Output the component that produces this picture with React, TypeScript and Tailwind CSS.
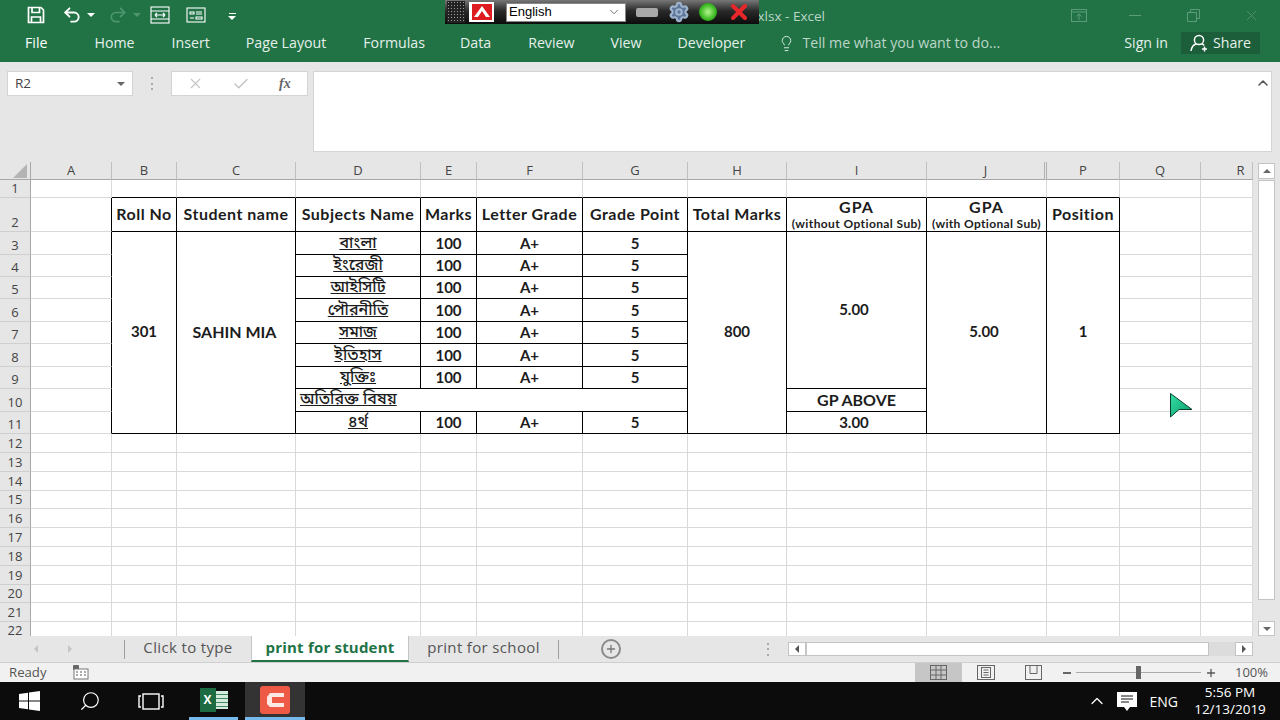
import React from "react";
import { Undo2, Redo2, Lightbulb, Search, X, Check, ChevronUp, ChevronDown, Plus, Settings } from "lucide-react";

const colWidths = ["w-[31px]","w-[81px]","w-[65px]","w-[119px]","w-[125px]","w-[56px]","w-[106px]","w-[105px]","w-[99px]","w-[140px]","w-[120px]","w-[73px]","w-[81px]","w-[52px]"];
const letters = ["A","B","C","D","E","F","G","H","I","J","P","Q","R"];
const tabs = [
  ["Home","ml-[47px]"],["Insert","ml-[37px]"],["Page Layout","ml-[36px]"],["Formulas","ml-[37px]"],["Data","ml-[35px]"],["Review","ml-[37px]"],["View","ml-[36px]"],["Developer","ml-[36px]"],
];
const subjects: [string, string][] = [
  ["3","বাংলা "],["4","ইংরেজী"],["5","আইসিটি"],["6","পৌরনীতি"],["7","সমাজ "],["8","ইতিহাস"],["9","যুক্তিঃ"],
];
const rowH: Record<string,string> = {"3":"h-[23px]","4":"h-[22px]","5":"h-[22px]","6":"h-[23px]","7":"h-[22px]","8":"h-[23px]","9":"h-[22px]","10":"h-[23px]","11":"h-[22px]"};
const blankRows = [["12","h-[19px]"],["13","h-[19px]"],["14","h-[19px]"],["15","h-[18px]"],["16","h-[19px]"],["17","h-[19px]"],["18","h-[19px]"],["19","h-[19px]"],["20","h-[18px]"],["21","h-[19px]"]];

const black = "border-r border-b border-black p-0 text-center align-middle font-bold text-[15px] leading-none text-[#1c1c1c] font-['Lato',sans-serif]";
const headCell = black + " pb-[2px]";
const head = "text-[16px] tracking-[0.5px]";
const light = "border-r border-b border-[#d9d9d9] p-0";
const rowHead = "border-r border-b border-r-[#a8a8a8] border-b-[#cfcfcf] bg-[#e6e6e6] p-0 text-center align-bottom text-[13px] leading-[17px] text-[#444]";
const bn = "font-['Noto_Sans_Bengali','Noto_Sans','Lohit_Bengali',sans-serif] underline text-[16px] font-medium";

function Light({ n }: { n: number }) {
  return <>{Array.from({ length: n }).map((_, i) => <td key={i} className={light} />)}</>;
}

function IconSave() {
  return (
    <svg width="18" height="18" viewBox="0 0 18 18" fill="none" stroke="#fff" strokeWidth="1.7">
      <path d="M1.5 1.5h12.5l2.5 2.5v12.5h-15z" />
      <path d="M5 1.5v5h7.5v-5M4.5 16.5v-5.5h9v5.5" />
    </svg>
  );
}

function Qat1() {
  return (
    <svg width="20" height="18" viewBox="0 0 20 18" fill="none" stroke="#fff" strokeWidth="1.1">
      <rect x="1" y="1" width="18" height="16" />
      <path d="M1 5h18M1 13h18M5 9h10M5 9l2-2M5 9l2 2M15 9l-2-2M15 9l-2 2" />
    </svg>
  );
}

function Qat2() {
  return (
    <svg width="20" height="16" viewBox="0 0 20 16" fill="none" stroke="#fff" strokeWidth="1.1">
      <rect x="1" y="1" width="18" height="14" />
      <path d="M4 5h4v2H4zM10 5h6M10 7h6M10 10h6v2h-6zM4 11h4" />
    </svg>
  );
}

function Win() {
  return (
    <svg width="21" height="20" viewBox="0 0 21 20" fill="#fff">
      <path d="M0 3l9-1.3v7.8H0zM10 1.5L21 0v9.5H10zM0 10.5h9v7.8L0 17zM10 10.5h11V20l-11-1.5z" />
    </svg>
  );
}

function ShareUser() {
  return (
    <svg width="19" height="18" viewBox="0 0 19 18" fill="none" stroke="#fff" strokeWidth="1.5">
      <circle cx="9" cy="6" r="4.6" />
      <path d="M1 17c.6-4 3-6.4 5.4-7.2M11.6 9.8c1 .3 1.9.9 2.6 1.6M14.5 12.5v5M12 15h5" />
    </svg>
  );
}

export default function App() {
  return (
    <div className="relative flex h-[720px] w-[1280px] flex-col overflow-hidden bg-white font-['Open_Sans',sans-serif]">
      {/* Title bar */}
      <header className="flex h-[62px] shrink-0 flex-col bg-[#217346] text-white">
        <div className="flex h-[30px] items-center">
          <div className="ml-[27px]"><IconSave /></div>
          <Undo2 className="ml-[17px]" size={20} strokeWidth={2.2} color="#fff" />
          <span className="ml-[5px] h-0 w-0 border-x-[4px] border-t-[4px] border-x-transparent border-t-white" />
          <Redo2 className="ml-[13px]" size={20} strokeWidth={2} color="#4f9670" />
          <span className="ml-[5px] h-0 w-0 border-x-[4px] border-t-[4px] border-x-transparent border-t-[#4f9670]" />
          <div className="ml-[9px]"><Qat1 /></div>
          <div className="ml-[16px]"><Qat2 /></div>
          <div className="ml-[22px] flex flex-col items-center gap-[2px] pt-[3px]">
            <span className="h-[1px] w-[7px] bg-white" />
            <span className="h-0 w-0 border-x-[4px] border-t-[4px] border-x-transparent border-t-white" />
          </div>
          <span className="ml-[518px] pt-[3px] text-[13.5px] text-[#bcd6c7]">.xlsx - Excel</span>
          <div className="ml-auto flex items-center pr-[20px]">
            <svg width="16" height="13" viewBox="0 0 16 13" fill="none" stroke="#5c9c7a"><rect x="0.5" y="0.5" width="15" height="12" /><path d="M0.5 3h15M8 11V5M5.5 7.5L8 5l2.5 2.5" /></svg>
            <span className="ml-[42px] h-[1px] w-[12px] bg-[#5c9c7a]" />
            <svg className="ml-[46px]" width="13" height="13" viewBox="0 0 13 13" fill="none" stroke="#5c9c7a"><path d="M0.5 3.5h9v9h-9zM3.5 3.5v-3h9v9h-3" /></svg>
            <X className="ml-[43px]" size={17} strokeWidth={1} color="#5c9c7a" />
          </div>
        </div>
        <nav className="flex h-[32px] items-center pb-[6px] text-[14.2px] text-[#e6f0ea]">
          <span className="ml-[25px] font-medium text-white">File</span>
          {tabs.map(([t, c]) => <span key={t} className={c}>{t}</span>)}
          <Lightbulb className="ml-[33px]" size={17} strokeWidth={1.4} color="#d9e8df" />
          <span className="ml-[7px] text-[#bcd6c7]">Tell me what you want to do...</span>
          <span className="ml-auto">Sign in</span>
          <span className="ml-[13px] mr-[20px] flex h-[22px] w-[79px] items-center justify-center gap-[4px] bg-[#1b5e39]">
            <ShareUser />Share
          </span>
        </nav>
      </header>

      {/* Formula bar */}
      <section className="flex h-[100px] shrink-0 items-start bg-[#e6e6e6] pt-[9px] pl-[7px] pr-[8px]">
        <div className="flex h-[25px] w-[126px] items-center justify-between border border-[#d4d4d4] bg-white pl-[7px] pr-[7px] text-[13.5px] text-[#444]">
          R2
          <span className="h-0 w-0 border-x-[4px] border-t-[4px] border-x-transparent border-t-[#666]" />
        </div>
        <span className="mt-[4px] ml-[18px] mr-[18px] flex h-[17px] flex-col justify-between py-[2px]">
          <i className="h-[2px] w-[2px] bg-[#aaa]" /><i className="h-[2px] w-[2px] bg-[#aaa]" /><i className="h-[2px] w-[2px] bg-[#aaa]" />
        </span>
        <div className="flex h-[25px] w-[137px] items-center border border-[#d4d4d4] bg-white pl-[15px]">
          <X size={17} strokeWidth={1.5} color="#c4c4c4" />
          <Check className="ml-[28px]" size={18} strokeWidth={2} color="#c4c4c4" />
          <span className="ml-[29px] font-['Liberation_Serif',serif] text-[14px] font-bold italic text-[#666]">fx</span>
        </div>
        <div className="ml-[5px] flex h-[81px] flex-1 justify-end border border-[#d4d4d4] bg-white pt-[3px]">
          <ChevronUp size={16} strokeWidth={2.4} color="#555" />
        </div>
      </section>

      {/* Sheet */}
      <section className="flex h-[474px] shrink-0">
        <div className="w-[1253px] shrink-0 border-r border-[#a8a8a8]">
          <table className="w-[1253px] table-fixed border-separate border-spacing-0">
            <colgroup>{colWidths.map((w, i) => <col key={i} className={w} />)}</colgroup>
            <tbody>
              <tr className="h-[18px]">
                <td className="border-r border-b border-[#a8a8a8] bg-[#e6e6e6] p-0">
                  <svg className="ml-[13px] mt-[1px]" width="14" height="14" viewBox="0 0 14 14"><path d="M14 0v14H0z" fill="#b4b4b4" /></svg>
                </td>
                {letters.map((l) => (
                  <td key={l} className={l === "J"
                    ? "border-r-[3px] border-b border-double border-r-[#b0b0b0] border-b-[#a8a8a8] bg-[#e6e6e6] p-0 text-center text-[13px] leading-none text-[#444]"
                    : l === "R"
                    ? "border-r border-b border-r-[#c0c0c0] border-b-[#a8a8a8] bg-[#e6e6e6] p-0 pl-[28px] text-center text-[13px] leading-none text-[#444]"
                    : "border-r border-b border-r-[#c0c0c0] border-b-[#a8a8a8] bg-[#e6e6e6] p-0 text-center text-[13px] leading-none text-[#444]"}>
                    {l}
                  </td>
                ))}
              </tr>
              <tr className="h-[18px]">
                <td className={rowHead}>1</td>
                <td className={light} />
                {letters.slice(1, 11).map((l) => <td key={l} className="border-r border-b border-r-[#d9d9d9] border-b-black p-0" />)}
                <Light n={2} />
              </tr>
              <tr className="h-[34px]">
                <td className={rowHead}>2</td>
                <td className="border-r border-b border-r-black border-b-[#d9d9d9] p-0" />
                <td className={headCell}><span className={head}>Roll No</span></td>
                <td className={headCell}><span className={head}>Student name</span></td>
                <td className={headCell}><span className={head}>Subjects Name</span></td>
                <td className={headCell}><span className={head}>Marks</span></td>
                <td className={headCell}><span className={head}>Letter Grade</span></td>
                <td className={headCell}><span className={head}>Grade Point</span></td>
                <td className={headCell}><span className={head}>Total Marks</span></td>
                <td className={black}>
                  <div className={head + " tracking-[1px]"}>GPA</div>
                  <div className="mt-[3px] text-[12px] tracking-[0.4px]">(without Optional Sub)</div>
                </td>
                <td className={black}>
                  <div className={head + " tracking-[1px]"}>GPA</div>
                  <div className="mt-[3px] text-[12px] tracking-[0.35px]">(with Optional Sub)</div>
                </td>
                <td className={headCell}><span className={head}>Position</span></td>
                <Light n={2} />
              </tr>
              {subjects.map(([n, s], i) => (
                <tr key={n} className={rowH[n]}>
                  <td className={rowHead}>{n}</td>
                  <td className="border-r border-b border-r-black border-b-[#d9d9d9] p-0" />
                  {i === 0 && (
                    <>
                      <td rowSpan={9} className={black + " pb-[2px]"}>301</td>
                      <td rowSpan={9} className={black + " pb-[2px]"}><span className="pr-[3px] text-[16px]">SAHIN MIA</span></td>
                    </>
                  )}
                  <td className={black}><span className={bn}>{s}</span></td>
                  <td className={black}>100</td>
                  <td className={black}>A+</td>
                  <td className={black}>5</td>
                  {i === 0 && (
                    <>
                      <td rowSpan={9} className={black + " pb-[2px]"}>800</td>
                      <td rowSpan={7} className={black + " pb-[2px]"}><span className="pr-[5px]">5.00</span></td>
                      <td rowSpan={9} className={black + " pb-[2px]"}><span className="pr-[5px]">5.00</span></td>
                      <td rowSpan={9} className={black + " pb-[2px]"}>1</td>
                    </>
                  )}
                  <Light n={2} />
                </tr>
              ))}
              <tr className={rowH["10"]}>
                <td className={rowHead}>10</td>
                <td className="border-r border-b border-r-black border-b-[#d9d9d9] p-0" />
                <td colSpan={4} className={black + " text-left"}>
                  <span className={bn + " ml-[4px] block text-left"}>অতিরিক্ত বিষয়</span>
                </td>
                <td className={black}><span className="text-[16px]">GP ABOVE</span></td>
                <Light n={2} />
              </tr>
              <tr className={rowH["11"]}>
                <td className={rowHead}>11</td>
                <td className="border-r border-b border-r-black border-b-[#d9d9d9] p-0" />
                <td className={black}><span className={bn}>৪র্থ</span></td>
                <td className={black}>100</td>
                <td className={black}>A+</td>
                <td className={black}>5</td>
                <td className={black}><span className="pr-[5px]">3.00</span></td>
                <Light n={2} />
              </tr>
              {blankRows.map(([n, h]) => (
                <tr key={n} className={h}>
                  <td className={rowHead}>{n}</td>
                  <Light n={13} />
                </tr>
              ))}
              <tr className="h-[15px]">
                <td className="border-r border-r-[#a8a8a8] bg-[#e6e6e6] p-0 text-center align-bottom text-[13px] leading-[15px] text-[#444]">
                  <span className="relative top-[1px]">22</span>
                </td>
                {letters.map((l) => <td key={l} className="border-r border-[#d9d9d9] p-0" />)}
              </tr>
            </tbody>
          </table>
        </div>
        <div className="flex flex-1 flex-col items-center bg-[#e6e6e6] pt-[1px]">
          <button className="flex h-[16px] w-[17px] items-center justify-center border border-[#c4c4c4] bg-white">
            <span className="h-0 w-0 border-x-[4px] border-b-[4px] border-x-transparent border-b-[#666]" />
          </button>
          <div className="mt-[1px] h-[420px] w-[17px] border border-[#c4c4c4] bg-white" />
          <div className="flex-1" />
          <button className="flex h-[15px] w-[17px] items-center justify-center border border-[#c4c4c4] bg-white">
            <span className="h-0 w-0 border-x-[4px] border-t-[4px] border-x-transparent border-t-[#666]" />
          </button>
        </div>
      </section>

      {/* Sheet tabs */}
      <section className="relative flex h-[26px] shrink-0 items-center bg-[#e6e6e6] text-[15px] tracking-[0.35px] text-[#555]">
        <span className="ml-[34px] h-0 w-0 border-y-[4px] border-r-[4px] border-y-transparent border-r-[#c4c4c4]" />
        <span className="ml-[30px] h-0 w-0 border-y-[4px] border-l-[4px] border-y-transparent border-l-[#c4c4c4]" />
        <span className="ml-[52px] h-[19px] w-[1px] bg-[#9f9f9f]" />
        <span className="flex w-[126px] justify-center pb-[3px]">Click to type</span>
        <span className="flex h-[26px] w-[158px] items-center justify-center border-b-2 border-x border-[#217346] border-x-[#c4c4c4] bg-white pb-[2px] font-bold tracking-[0.2px] text-[#217346]">print for student</span>
        <span className="flex w-[149px] justify-center pb-[3px]">print for school</span>
        <span className="h-[19px] w-[1px] bg-[#9f9f9f]" />
        <span className="ml-[42px] flex h-[20px] w-[20px] items-center justify-center rounded-full border-2 border-[#8a8a8a]">
          <Plus size={12} strokeWidth={2.6} color="#777" />
        </span>
        <span className="ml-[146px] flex h-[17px] flex-col justify-between py-[2px]">
          <i className="h-[2px] w-[2px] bg-[#aaa]" /><i className="h-[2px] w-[2px] bg-[#aaa]" /><i className="h-[2px] w-[2px] bg-[#aaa]" />
        </span>
        <div className="ml-[19px] flex h-[14px] w-[465px] items-stretch">
          <span className="flex w-[18px] items-center justify-center border border-[#c4c4c4] bg-white">
            <span className="h-0 w-0 border-y-[4px] border-r-[4px] border-y-transparent border-r-[#555]" />
          </span>
          <span className="w-[403px] border border-[#c4c4c4] bg-white" />
          <span className="flex-1 bg-[#dcdcdc]" />
          <span className="flex w-[18px] items-center justify-center border border-[#c4c4c4] bg-white">
            <span className="h-0 w-0 border-y-[4px] border-l-[4px] border-y-transparent border-l-[#555]" />
          </span>
        </div>
      </section>

      {/* Status bar */}
      <section className="flex h-[20px] shrink-0 items-center border-t border-[#cfcfcf] bg-[#f1f1f1] text-[13.2px] text-[#555]">
        <span className="ml-[9px]">Ready</span>
        <svg className="ml-[26px]" width="16" height="15" viewBox="0 0 16 15" fill="none">
          <rect x="0" y="0" width="6" height="5" rx="1" fill="#666" />
          <rect x="1" y="4" width="14" height="10" fill="#fff" stroke="#777" />
          <path d="M3 7h2M7 7h2M11 7h2M3 10h2M7 10h2M11 10h2" stroke="#555" />
        </svg>
        <div className="ml-auto flex h-full items-center">
          <span className="flex h-full w-[47px] items-center justify-center bg-[#c6c6c6]">
            <svg width="17" height="15" viewBox="0 0 17 15" fill="none" stroke="#666"><rect x="0.5" y="0.5" width="16" height="14" /><path d="M0.5 5h16M0.5 10h16M6 0.5v14M11 0.5v14" /></svg>
          </span>
          <svg className="ml-[15px]" width="18" height="15" viewBox="0 0 18 15" fill="none" stroke="#666"><rect x="0.5" y="0.5" width="17" height="14" /><rect x="4.5" y="2.5" width="9" height="10" /><path d="M6.5 5h5M6.5 7.5h5M6.5 10h5" /></svg>
          <svg className="ml-[30px]" width="17" height="15" viewBox="0 0 17 15" fill="none" stroke="#666"><rect x="0.5" y="0.5" width="16" height="14" /><path d="M5 0.5v8h7v-8" /></svg>
          <span className="ml-[21px] h-[2px] w-[8px] bg-[#666]" />
          <div className="relative ml-[5px] h-[1px] w-[125px] bg-[#aaa]">
            <span className="absolute left-[60px] top-[-6px] h-[13px] w-[5px] bg-[#666]" />
          </div>
          <Plus className="ml-[4px]" size={12} strokeWidth={2.6} color="#555" />
          <span className="ml-[18px] mr-[12px] text-[13px]">100%</span>
        </div>
      </section>

      {/* Taskbar */}
      <footer className="flex flex-1 items-stretch bg-[#0c0c0c] text-white">
        <span className="ml-[19px] flex items-center"><Win /></span>
        <Search className="ml-[39px] -scale-x-100 self-center" size={22} strokeWidth={1.3} color="#fff" />
        <svg className="ml-[37px] self-center" width="26" height="17" viewBox="0 0 26 17" fill="none" stroke="#fff" strokeWidth="1.4">
          <rect x="5" y="1" width="16" height="15" /><path d="M3 3H1v11h2M23 3h2v11h-2" />
        </svg>
        <span className="ml-[25px] flex w-[49px] items-center justify-center border-b-[3px] border-[#76b9ed]">
          <span className="relative flex h-[24px] w-[28px] items-center">
            <span className="absolute right-0 top-[3px] h-[18px] w-[14px] bg-[repeating-linear-gradient(#d5eadd_0_3px,#3f8a62_3px_4px)]" />
            <span className="absolute left-0 flex h-[24px] w-[16px] items-center justify-center bg-[#1d6b42] text-[12px] font-bold">X</span>
          </span>
        </span>
        <span className="ml-[7px] flex w-[60px] items-center justify-center border-b-[3px] border-[#76b9ed] bg-[#333]">
          <svg width="30" height="28" viewBox="0 0 30 28">
            <rect width="30" height="28" rx="3" fill="#ee5a46" />
            <path d="M24 7H10L7 11v7l3 3h14v-4H12v-6h12z" fill="#fde8e3" />
          </svg>
        </span>
        <div className="ml-auto flex items-center">
          <ChevronUp size={20} strokeWidth={1.5} color="#fff" />
          <svg className="ml-[10px]" width="20" height="19" viewBox="0 0 20 19">
            <path d="M0 0h20v15h-7l-3 4-3-4H0z" fill="#fff" />
            <path d="M4 4h12M4 7h12M4 10h8" stroke="#111" />
          </svg>
          <span className="ml-[13px] text-[14px]">ENG</span>
          <div className="ml-[16px] mr-[14px] flex w-[72px] flex-col items-center text-[13.5px] leading-[17px]">
            <span>5:56 PM</span>
            <span>12/13/2019</span>
          </div>
        </div>
      </footer>

      {/* Language bar floating over the title bar */}
      <div className="absolute left-[445px] top-0 flex h-[24px] w-[314px] items-center bg-[linear-gradient(#777,#2a2a2a_45%,#0c0c0c)]">
        <span className="ml-[2px] h-[22px] w-[18px] bg-[radial-gradient(#999_1px,#222_1px)] bg-[length:3px_3px]" />
        <span className="ml-[4px] flex h-[20px] w-[25px] items-center justify-center bg-white">
          <svg width="20" height="16" viewBox="0 0 20 16"><rect width="20" height="16" fill="#dd1c22" /><path d="M10 2L2 13h4l4-6 4 6h4z" fill="#fff" /></svg>
        </span>
        <div className="ml-[12px] flex h-[19px] w-[120px] items-center justify-between border border-[#888] bg-white pl-[2px] pr-[4px] font-['Liberation_Sans',sans-serif] text-[13px] text-black">
          English
          <ChevronDown size={14} strokeWidth={1.2} color="#333" />
        </div>
        <span className="ml-[10px] h-[9px] w-[22px] rounded-[2px] bg-[#a8a8a8]" />
        <Settings className="ml-[10px]" size={22} strokeWidth={2.4} color="#9fb4cc" fill="#5c7699" />
        <span className="ml-[9px] h-[18px] w-[18px] rounded-full bg-[radial-gradient(#b5f58f,#39b81f_60%,#167a10)]" />
        <X className="ml-[10px]" size={24} strokeWidth={4} color="#e8272b" />
      </div>

      {/* Mouse pointer */}
      <svg className="absolute left-[1169px] top-[392px]" width="25" height="26" viewBox="0 0 25 26">
        <defs>
          <linearGradient id="cur" x1="0" y1="0" x2="1" y2="1">
            <stop offset="0" stopColor="#35e0a5" />
            <stop offset="1" stopColor="#0c9a6c" />
          </linearGradient>
        </defs>
        <path d="M1.5 1.5L23 17.5 10 17.5 1.5 25z" fill="url(#cur)" stroke="#0b3f30" strokeWidth="1" />
      </svg>
    </div>
  );
}
